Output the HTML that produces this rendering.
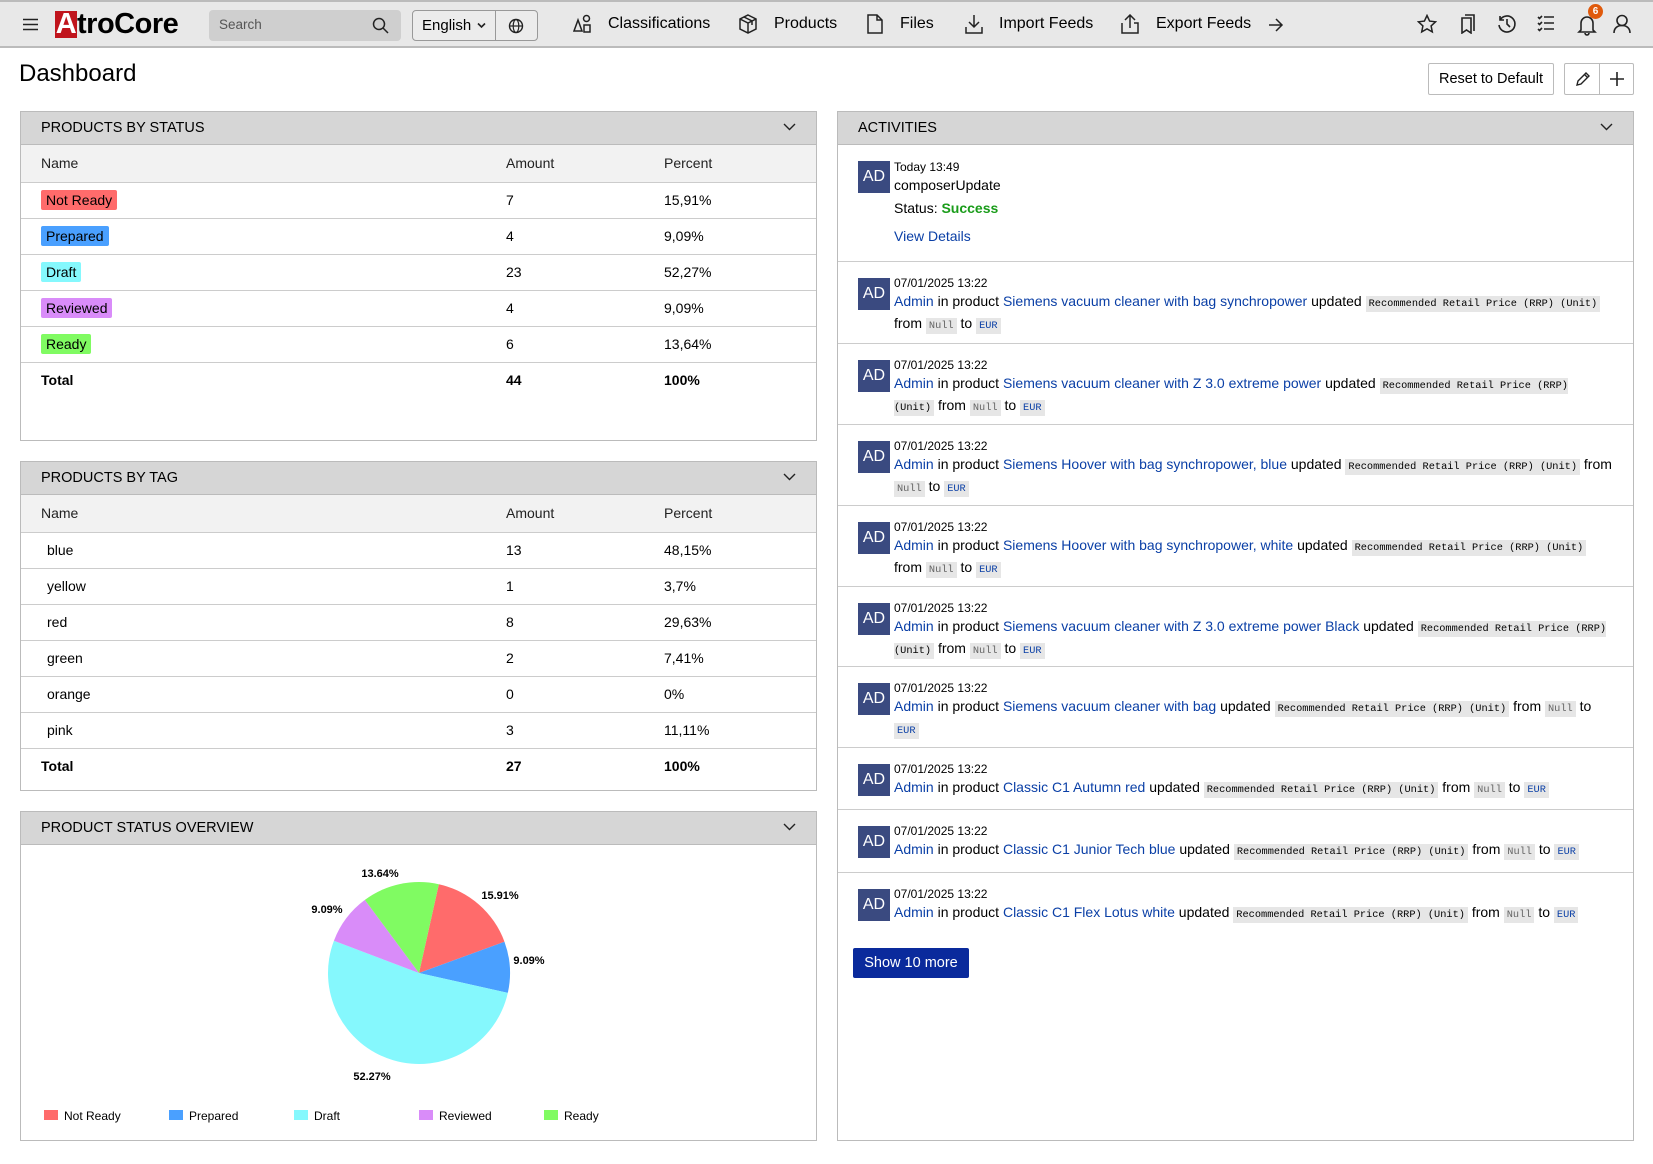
<!DOCTYPE html>
<html><head><meta charset="utf-8">
<style>
*{box-sizing:border-box;margin:0;padding:0}
body{width:1653px;height:1164px;overflow:hidden;background:#fff;font-family:"Liberation Sans",Arial,sans-serif;color:#000;position:relative;font-size:15px}
.nav{position:absolute;left:0;top:0;width:1653px;height:48px;background:#e8e8e8;border-top:2px solid #bbb;border-bottom:2px solid #bbb}
.abs{position:absolute}
.navtxt{position:absolute;top:13px;font-size:16px}
.ico{position:absolute;top:12px}
.panel{position:absolute;border:1px solid #bbb;background:#fff}
.ph{height:33px;background:#d6d6d6;border-bottom:1px solid #bbb;padding-left:20px;line-height:32px;font-size:14.5px;position:relative}
.ph .chev{position:absolute;right:20px;top:11px}
table{border-collapse:collapse;width:100%;font-size:14px}
th{font-weight:normal;text-align:left;background:#f2f2f2;height:37px;border-bottom:1px solid #ccc;color:#222}
td{height:36px;border-bottom:1px solid #ccc}
tr.tot td{border-bottom:none;font-weight:bold}
td:first-child,th:first-child{padding-left:20px;width:485px}
td:nth-child(2),th:nth-child(2){width:158px}
.b{display:inline-block;padding:1px 5px;border-radius:2px;line-height:18px}
.tag{padding-left:6px}
.act{position:relative;border-bottom:1px solid #ccc}
.av{position:absolute;left:20px;width:32px;height:32px;background:#3a4a80;color:#fff;font-size:16px;line-height:32px;text-align:center}
.ac{position:absolute;left:56px;right:20px;line-height:19px;font-size:14px}
.dt{font-size:12px;line-height:17px}
a{color:#0a3fa6;text-decoration:none}
code{font-family:"Liberation Mono",monospace;font-size:10.3px;background:#e6e6e6;padding:2px 3px;color:#000}
code.n{color:#666}
code.e{color:#0a3fa6}
</style></head><body>
<div class="nav">
 <svg class="abs" style="left:23px;top:16px" width="15" height="13" viewBox="0 0 15 13"><path d="M0 1.5h15M0 6.5h15M0 11.5h15" stroke="#222" stroke-width="1.6"/></svg>
 <div class="abs" style="left:55px;top:9px;width:22px;height:27px;background:#c0141c"></div>
 <div class="abs" style="left:55px;top:4px;font-size:29px;font-weight:bold;letter-spacing:-0.5px;line-height:36px"><span style="color:#fff;display:inline-block;width:22px;text-align:center">A</span>troCore</div>
 <div class="abs" style="left:209px;top:8px;width:192px;height:31px;background:#cfcfcf;border-radius:4px"><span style="position:absolute;left:10px;top:7px;font-size:13.5px;color:#555">Search</span>
  <svg style="position:absolute;right:12px;top:7px" width="17" height="17" viewBox="0 0 17 17"><circle cx="7" cy="7" r="5.5" fill="none" stroke="#222" stroke-width="1.5"/><path d="M11 11l5 5" stroke="#222" stroke-width="1.5"/></svg></div>
 <div class="abs" style="left:412px;top:8px;width:126px;height:31px;border:1px solid #999;border-radius:4px;background:#ececec">
  <span style="position:absolute;left:9px;top:6px;font-size:15px">English</span>
  <svg style="position:absolute;left:64px;top:11px" width="9" height="7" viewBox="0 0 9 7"><path d="M1 1.5l3.5 3.5 3.5-3.5" fill="none" stroke="#222" stroke-width="1.6"/></svg>
  <div style="position:absolute;left:82px;top:0;width:1px;height:29px;background:#999"></div>
  <svg style="position:absolute;left:95px;top:7px" width="16" height="16" viewBox="0 0 16 16"><circle cx="8" cy="8" r="6.5" fill="none" stroke="#222" stroke-width="1.4"/><ellipse cx="8" cy="8" rx="2.8" ry="6.5" fill="none" stroke="#222" stroke-width="1.2"/><path d="M1.5 8h13" stroke="#222" stroke-width="1.2"/></svg>
 </div>
 <svg class="ico" style="left:573px" width="20" height="20" viewBox="0 0 20 20" fill="none" stroke="#222" stroke-width="1.5"><path d="M5 6l-4 11h8z"/><circle cx="13.5" cy="4.5" r="3"/><rect x="11" y="11" width="6" height="7"/></svg>
 <div class="navtxt" style="left:608px">Classifications</div>
 <svg class="ico" style="left:738px" width="20" height="20" viewBox="0 0 20 20" fill="none" stroke="#222" stroke-width="1.5"><path d="M10 1l8 4v10l-8 4-8-4V5z M2 5l8 4 8-4 M10 9v10 M6 3l8 4v4"/></svg>
 <div class="navtxt" style="left:774px">Products</div>
 <svg class="ico" style="left:866px" width="18" height="20" viewBox="0 0 18 20" fill="none" stroke="#222" stroke-width="1.5"><path d="M2 1h9l5 5v13H2z M11 1v5h5"/></svg>
 <div class="navtxt" style="left:900px">Files</div>
 <svg class="ico" style="left:964px" width="20" height="20" viewBox="0 0 20 20" fill="none" stroke="#222" stroke-width="1.5"><path d="M10 1v12 M5 8l5 5 5-5 M2 13v6h16v-6"/></svg>
 <div class="navtxt" style="left:999px">Import Feeds</div>
 <svg class="ico" style="left:1120px" width="20" height="20" viewBox="0 0 20 20" fill="none" stroke="#222" stroke-width="1.5"><path d="M10 14V1 M5 6l5-5 5 5 M2 9v10h16V9h-4"/></svg>
 <div class="navtxt" style="left:1156px">Export Feeds</div>
 <svg class="ico" style="left:1268px;top:16px" width="16" height="14" viewBox="0 0 16 14" fill="none" stroke="#222" stroke-width="1.5"><path d="M1 7h13 M8 1l6 6-6 6"/></svg>
 <svg class="ico" style="left:1417px" width="20" height="20" viewBox="0 0 20 20" fill="none" stroke="#222" stroke-width="1.5"><path d="M10 1.5l2.6 5.6 6 .7-4.5 4.1 1.2 6-5.3-3-5.3 3 1.2-6L1.4 7.8l6-.7z"/></svg>
 <svg class="ico" style="left:1460px" width="16" height="20" viewBox="0 0 16 20" fill="none" stroke="#222" stroke-width="1.6"><path d="M5 1h9v16 M2 4h9v15l-4.5-3L2 19z"/></svg>
 <svg class="ico" style="left:1497px" width="20" height="20" viewBox="0 0 20 20" fill="none" stroke="#222" stroke-width="1.6"><path d="M3 6a8 8 0 1 1-1 5 M3 2v4h4 M10 5v5l3 3"/></svg>
 <svg class="ico" style="left:1537px" width="18" height="18" viewBox="0 0 18 18" fill="none" stroke="#222" stroke-width="1.6"><path d="M7 3h10 M7 9h10 M7 15h10 M1 3l1.5 1.5L5 2 M1 9l1.5 1.5L5 8 M1 15l1.5 1.5L5 14"/></svg>
 <svg class="ico" style="left:1577px" width="20" height="22" viewBox="0 0 20 22" fill="none" stroke="#222" stroke-width="1.6"><path d="M4 16V9a6 6 0 0 1 12 0v7l2 2H2z M8 19a2 2 0 0 0 4 0"/></svg>
 <div class="abs" style="left:1588px;top:2px;width:15px;height:15px;border-radius:50%;background:#e05a0c;color:#fff;font-size:10px;font-weight:bold;text-align:center;line-height:15px">6</div>
 <svg class="ico" style="left:1612px" width="20" height="20" viewBox="0 0 20 20" fill="none" stroke="#222" stroke-width="1.6"><circle cx="10" cy="6.5" r="5"/><path d="M2 19c0-5 3.5-7.5 8-7.5s8 2.5 8 7.5"/></svg>
</div>

<div class="abs" style="left:19px;top:60px;font-size:24px">Dashboard</div>
<div class="abs" style="left:1428px;top:63px;width:126px;height:32px;border:1px solid #bbb;border-radius:2px;font-size:14.5px;text-align:center;line-height:30px">Reset to Default</div>
<div class="abs" style="left:1564px;top:63px;width:70px;height:32px;border:1px solid #bbb;border-radius:2px">
 <div style="position:absolute;left:34px;top:0;width:1px;height:30px;background:#bbb"></div>
 <svg style="position:absolute;left:10px;top:7px" width="16" height="16" viewBox="0 0 16 16" fill="none" stroke="#222" stroke-width="1.4"><path d="M2 14l1-4 8-8 3 3-8 8z M9.5 3.5l3 3"/></svg>
 <svg style="position:absolute;left:44px;top:7px" width="16" height="16" viewBox="0 0 16 16" stroke="#222" stroke-width="1.6"><path d="M8 1v14M1 8h14"/></svg>
</div>

<div class="panel" style="left:20px;top:111px;width:797px;height:330px">
 <div class="ph">PRODUCTS BY STATUS<svg class="chev" width="13" height="8" viewBox="0 0 13 8"><path d="M1 1l5.5 5.5L12 1" fill="none" stroke="#222" stroke-width="1.4"/></svg></div>
 <table>
 <tr><th>Name</th><th>Amount</th><th>Percent</th></tr>
 <tr><td><span class="b" style="background:#ff6b6b">Not Ready</span></td><td>7</td><td>15,91%</td></tr>
 <tr><td><span class="b" style="background:#4aa0ff">Prepared</span></td><td>4</td><td>9,09%</td></tr>
 <tr><td><span class="b" style="background:#85f8fd">Draft</span></td><td>23</td><td>52,27%</td></tr>
 <tr><td><span class="b" style="background:#d98cf9">Reviewed</span></td><td>4</td><td>9,09%</td></tr>
 <tr><td><span class="b" style="background:#80fb62">Ready</span></td><td>6</td><td>13,64%</td></tr>
 <tr class="tot"><td>Total</td><td>44</td><td>100%</td></tr>
 </table>
</div>

<div class="panel" style="left:20px;top:461px;width:797px;height:330px">
 <div class="ph">PRODUCTS BY TAG<svg class="chev" width="13" height="8" viewBox="0 0 13 8"><path d="M1 1l5.5 5.5L12 1" fill="none" stroke="#222" stroke-width="1.4"/></svg></div>
 <table>
 <tr><th>Name</th><th>Amount</th><th>Percent</th></tr>
 <tr><td><span class="tag">blue</span></td><td>13</td><td>48,15%</td></tr>
 <tr><td><span class="tag">yellow</span></td><td>1</td><td>3,7%</td></tr>
 <tr><td><span class="tag">red</span></td><td>8</td><td>29,63%</td></tr>
 <tr><td><span class="tag">green</span></td><td>2</td><td>7,41%</td></tr>
 <tr><td><span class="tag">orange</span></td><td>0</td><td>0%</td></tr>
 <tr><td><span class="tag">pink</span></td><td>3</td><td>11,11%</td></tr>
 <tr class="tot"><td>Total</td><td>27</td><td>100%</td></tr>
 </table>
</div>

<div class="panel" style="left:20px;top:811px;width:797px;height:330px">
 <div class="ph">PRODUCT STATUS OVERVIEW<svg class="chev" width="13" height="8" viewBox="0 0 13 8"><path d="M1 1l5.5 5.5L12 1" fill="none" stroke="#222" stroke-width="1.4"/></svg></div>
</div>
<svg class="abs" style="left:0;top:0" width="830" height="1164">
 <g transform="translate(419,973)">
  <path d="M0 0L19.85 -88.81A91 91 0 0 1 85.46 -31.28Z" fill="#ff6b6b"/>
  <path d="M0 0L85.46 -31.28A91 91 0 0 1 88.81 19.85Z" fill="#4aa0ff"/>
  <path d="M0 0L88.81 19.85A91 91 0 1 1 -85.07 -32.31Z" fill="#85f8fd"/>
  <path d="M0 0L-85.07 -32.31A91 91 0 0 1 -54.13 -73.15Z" fill="#d98cf9"/>
  <path d="M0 0L-54.13 -73.15A91 91 0 0 1 19.85 -88.81Z" fill="#80fb62"/>
 </g>
 <g font-family="Liberation Sans, Arial, sans-serif" font-size="11" font-weight="bold" text-anchor="middle">
  <text x="380" y="877">13.64%</text>
  <text x="500" y="899">15.91%</text>
  <text x="327" y="913">9.09%</text>
  <text x="529" y="964">9.09%</text>
  <text x="372" y="1080">52.27%</text>
 </g>
 <g font-family="Liberation Sans, Arial, sans-serif" font-size="12">
  <rect x="44" y="1110" width="14" height="10" fill="#ff6b6b"/><text x="64" y="1120">Not Ready</text>
  <rect x="169" y="1110" width="14" height="10" fill="#4aa0ff"/><text x="189" y="1120">Prepared</text>
  <rect x="294" y="1110" width="14" height="10" fill="#85f8fd"/><text x="314" y="1120">Draft</text>
  <rect x="419" y="1110" width="14" height="10" fill="#d98cf9"/><text x="439" y="1120">Reviewed</text>
  <rect x="544" y="1110" width="14" height="10" fill="#80fb62"/><text x="564" y="1120">Ready</text>
 </g>
</svg>

<div class="panel" style="left:837px;top:111px;width:797px;height:1030px">
 <div class="ph">ACTIVITIES<svg class="chev" width="13" height="8" viewBox="0 0 13 8"><path d="M1 1l5.5 5.5L12 1" fill="none" stroke="#222" stroke-width="1.4"/></svg></div>
 <div class="act" style="height:117px"><div class="av" style="top:16px">AD</div><div class="ac" style="top:14px"><div class="dt">Today 13:49</div><div>composerUpdate</div><div style="margin-top:4px">Status: <b style="color:#1a9c1a">Success</b></div><div style="margin-top:9px"><a>View Details</a></div></div></div>
 <div class="act" style="height:82px"><div class="av" style="top:16px">AD</div><div class="ac" style="top:13px"><div class="dt">07/01/2025 13:22</div><div><a>Admin</a> in product <a>Siemens vacuum cleaner with bag synchropower</a> updated <code>Recommended Retail Price (RRP) (Unit)</code> from <code class="n">Null</code> to <code class="e">EUR</code></div></div></div>
 <div class="act" style="height:81px"><div class="av" style="top:16px">AD</div><div class="ac" style="top:13px"><div class="dt">07/01/2025 13:22</div><div><a>Admin</a> in product <a>Siemens vacuum cleaner with Z 3.0 extreme power</a> updated <code>Recommended Retail Price (RRP) (Unit)</code> from <code class="n">Null</code> to <code class="e">EUR</code></div></div></div>
 <div class="act" style="height:81px"><div class="av" style="top:16px">AD</div><div class="ac" style="top:13px"><div class="dt">07/01/2025 13:22</div><div><a>Admin</a> in product <a>Siemens Hoover with bag synchropower, blue</a> updated <code>Recommended Retail Price (RRP) (Unit)</code> from <code class="n">Null</code> to <code class="e">EUR</code></div></div></div>
 <div class="act" style="height:81px"><div class="av" style="top:16px">AD</div><div class="ac" style="top:13px"><div class="dt">07/01/2025 13:22</div><div><a>Admin</a> in product <a>Siemens Hoover with bag synchropower, white</a> updated <code>Recommended Retail Price (RRP) (Unit)</code> from <code class="n">Null</code> to <code class="e">EUR</code></div></div></div>
 <div class="act" style="height:80px"><div class="av" style="top:16px">AD</div><div class="ac" style="top:13px"><div class="dt">07/01/2025 13:22</div><div><a>Admin</a> in product <a>Siemens vacuum cleaner with Z 3.0 extreme power Black</a> updated <code>Recommended Retail Price (RRP) (Unit)</code> from <code class="n">Null</code> to <code class="e">EUR</code></div></div></div>
 <div class="act" style="height:81px"><div class="av" style="top:16px">AD</div><div class="ac" style="top:13px"><div class="dt">07/01/2025 13:22</div><div><a>Admin</a> in product <a>Siemens vacuum cleaner with bag</a> updated <code>Recommended Retail Price (RRP) (Unit)</code> from <code class="n">Null</code> to <code class="e">EUR</code></div></div></div>
 <div class="act" style="height:62px"><div class="av" style="top:16px">AD</div><div class="ac" style="top:13px"><div class="dt">07/01/2025 13:22</div><div><a>Admin</a> in product <a>Classic C1 Autumn red</a> updated <code>Recommended Retail Price (RRP) (Unit)</code> from <code class="n">Null</code> to <code class="e">EUR</code></div></div></div>
 <div class="act" style="height:63px"><div class="av" style="top:16px">AD</div><div class="ac" style="top:13px"><div class="dt">07/01/2025 13:22</div><div><a>Admin</a> in product <a>Classic C1 Junior Tech blue</a> updated <code>Recommended Retail Price (RRP) (Unit)</code> from <code class="n">Null</code> to <code class="e">EUR</code></div></div></div>
 <div class="act" style="height:62px;border-bottom:none"><div class="av" style="top:16px">AD</div><div class="ac" style="top:13px"><div class="dt">07/01/2025 13:22</div><div><a>Admin</a> in product <a>Classic C1 Flex Lotus white</a> updated <code>Recommended Retail Price (RRP) (Unit)</code> from <code class="n">Null</code> to <code class="e">EUR</code></div></div></div>
 <div style="position:absolute;left:15px;top:836px;width:116px;height:30px;background:#0a2a9c;color:#fff;font-size:14.5px;text-align:center;line-height:30px;border-radius:2px">Show 10 more</div>
</div>
</body></html>
